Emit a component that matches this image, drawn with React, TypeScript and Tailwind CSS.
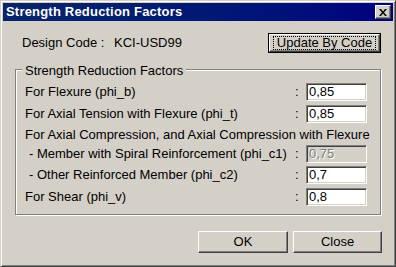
const raised =
  "border border-t-white border-l-white border-r-[#404040] border-b-[#404040] shadow-[inset_-1px_-1px_0_#808080,inset_1px_1px_0_#d4d0c8]";

const FactorRow = ({
  label,
  value,
  disabled,
  indent,
  className,
}: {
  label: string;
  value?: string;
  disabled?: boolean;
  indent?: boolean;
  className?: string;
}) => (
  <div className={`flex h-[18px] items-center ${className ?? ""}`}>
    <span className={`w-[270px] whitespace-nowrap ${indent ? "pl-[4px]" : ""}`}>{label}</span>
    {value !== undefined && (
      <>
        <span className="w-[11px]">:</span>
        <div
          className={`flex h-[18px] w-[61px] items-center border border-t-[#808080] border-l-[#808080] border-r-white border-b-white shadow-[inset_1px_1px_0_#404040,inset_-1px_-1px_0_#d4d0c8] pl-[2px] ${
            disabled ? "bg-[#d4d0c8] text-[#808080] [text-shadow:1px_1px_0_#fff]" : "bg-white text-black"
          }`}
        >
          {value}
        </div>
      </>
    )}
  </div>
);

export default function App() {
  return (
    <div className="flex h-[267px] w-[396px] flex-col border border-t-[#d4d0c8] border-l-[#d4d0c8] border-r-[#404040] border-b-[#404040] bg-[#d4d0c8] p-[2px] font-['Liberation_Sans',Arial,sans-serif] text-[13px] text-black shadow-[inset_1px_1px_0_#fff,inset_-1px_-1px_0_#808080]">
      {/* Title bar */}
      <div className="flex h-[18px] items-center justify-between bg-gradient-to-r from-[#0a246a] to-[#000080] pl-[3px] pr-[2px]">
        <span className="text-[13px] font-bold tracking-[0.2px] text-white">Strength Reduction Factors</span>
        <div className={`flex h-[14px] w-[16px] items-center justify-center bg-[#d4d0c8] ${raised}`}>
          <svg width="8" height="7" viewBox="0 0 8 7">
            <path d="M0 0h2l2 2.5L6 0h2L5 3.5 8 7H6L4 4.5 2 7H0l3-3.5z" fill="#000" />
          </svg>
        </div>
      </div>

      {/* Design code */}
      <div className="mt-[12px] flex h-[20px] items-center">
        <span className="ml-[19px] w-[92px]">Design Code :</span>
        <span>KCI-USD99</span>
        <div className="ml-auto mr-[12px] flex h-[20px] w-[113px] items-center justify-center border border-black bg-[#d4d0c8]">
          <div className={`flex h-full w-full items-center justify-center ${raised}`}>
            <span className="border border-dotted border-black px-[3px] leading-[12px]">Update By Code</span>
          </div>
        </div>
      </div>

      {/* Group box */}
      <div className="relative ml-[12px] mr-[12px] mt-[16px] h-[146px] border border-[#808080] shadow-[inset_1px_1px_0_#fff,1px_1px_0_#fff]">
        <span className="absolute left-[6px] top-[-9px] bg-[#d4d0c8] px-[3px]">Strength Reduction Factors</span>
        <div className="ml-[9px] mt-[13px] flex flex-col">
          <FactorRow label="For Flexure (phi_b)" value="0,85" />
          <FactorRow className="mt-[4px]" label="For Axial Tension with Flexure (phi_t)" value="0,85" />
          <FactorRow className="mt-[3px]" label="For Axial Compression, and Axial Compression with Flexure" />
          <FactorRow className="mt-[1px]" indent label="- Member with Spiral Reinforcement (phi_c1)" value="0,75" disabled />
          <FactorRow className="mt-[3px]" indent label="- Other Reinforced Member (phi_c2)" value="0,7" />
          <FactorRow className="mt-[4px]" label="For Shear (phi_v)" value="0,8" />
        </div>
      </div>

      {/* Buttons */}
      <div className="mt-[16px] flex justify-end gap-[5px] pr-[11px]">
        <div className={`flex h-[22px] w-[90px] items-center justify-center bg-[#d4d0c8] ${raised}`}>OK</div>
        <div className={`flex h-[22px] w-[89px] items-center justify-center bg-[#d4d0c8] ${raised}`}>Close</div>
      </div>
    </div>
  );
}
